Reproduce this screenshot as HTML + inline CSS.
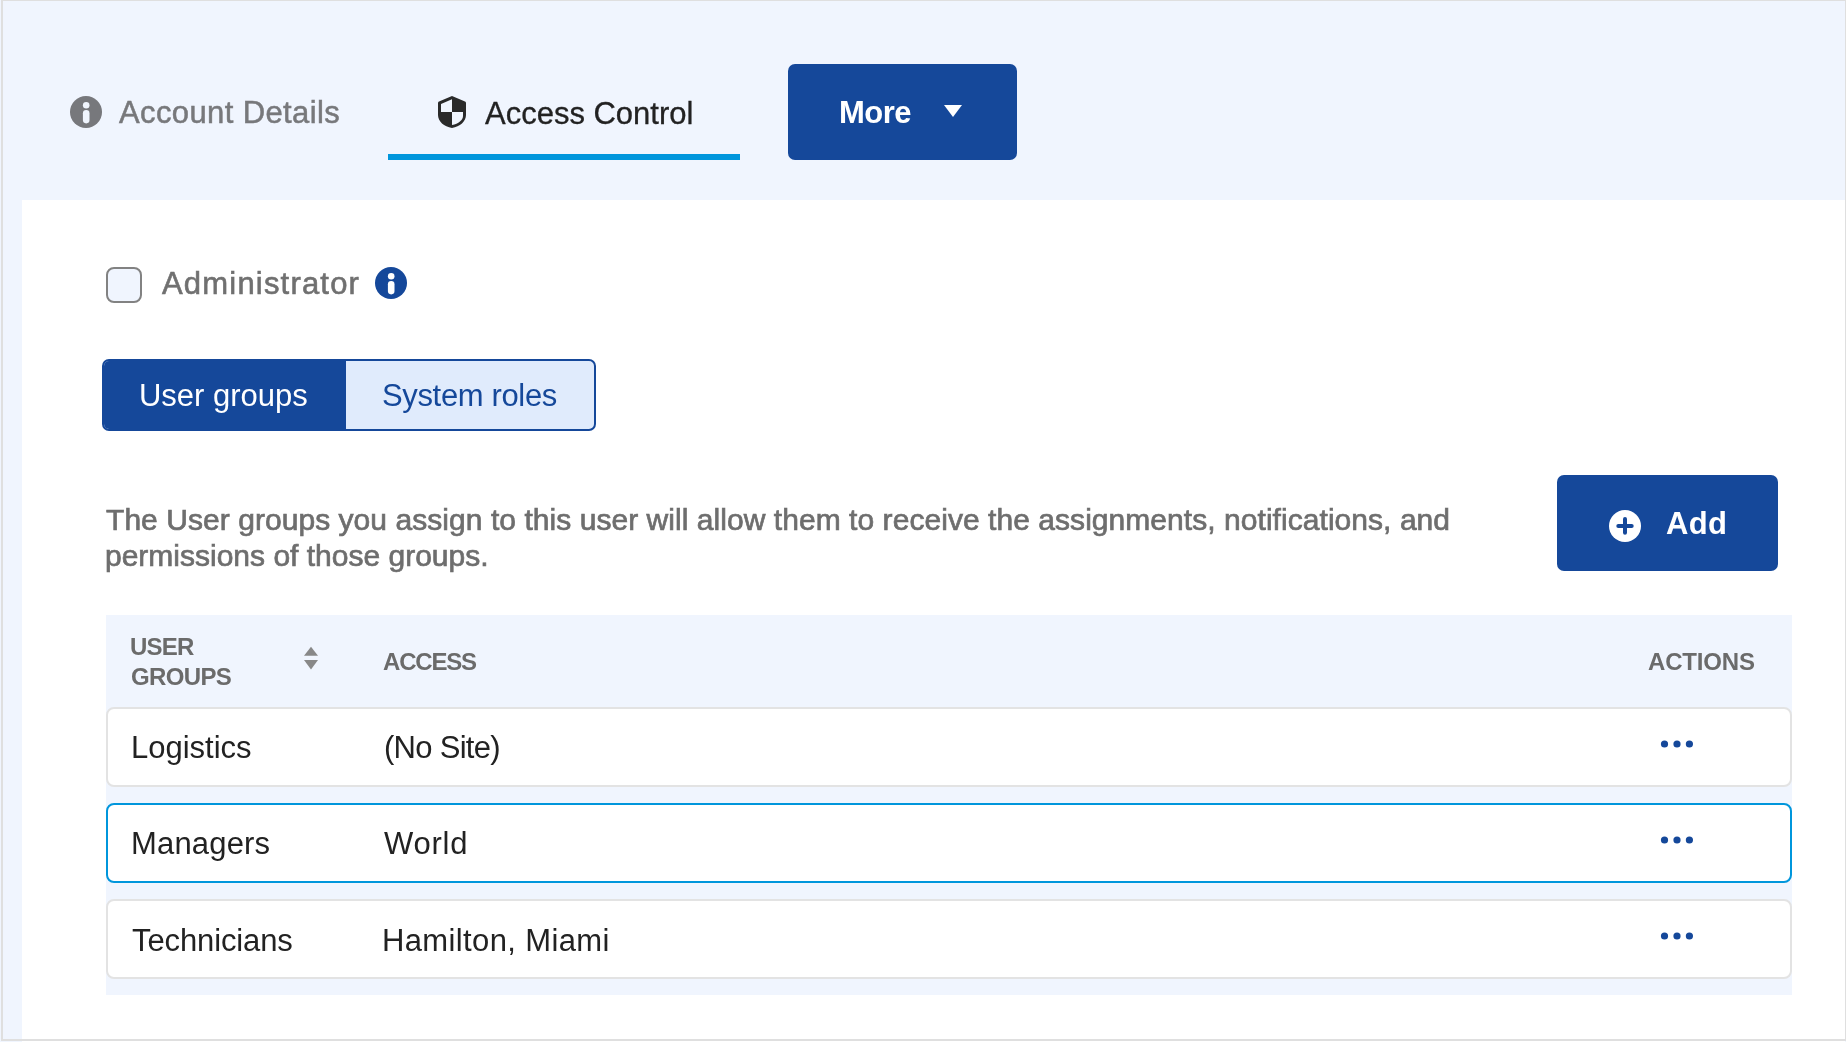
<!DOCTYPE html>
<html>
<head>
<meta charset="utf-8">
<style>
html, body { margin:0; padding:0; }
body { width:1846px; height:1042px; position:relative; overflow:hidden; background:#f0f5fe; font-family:"Liberation Sans", sans-serif; }
.a { position:absolute; box-sizing:border-box; }
.t { position:absolute; white-space:nowrap; font-family:"Liberation Sans", sans-serif; will-change:transform; }
svg { position:absolute; overflow:visible; }
</style>
</head>
<body>
<!-- frame borders -->
<div class="a" style="left:1px;top:0;width:2px;height:1041px;background:#dfdfdf;"></div>
<div class="a" style="left:1px;top:0;width:1845px;height:1px;background:#dfdfdf;"></div>
<div class="a" style="left:1845px;top:0;width:1px;height:1041px;background:#dfdfdf;"></div>
<!-- white panel -->
<div class="a" style="left:22px;top:200px;width:1823px;height:842px;background:#ffffff;"></div>
<div class="a" style="left:1px;top:1039px;width:1845px;height:2px;background:#dfdfdf;"></div>

<!-- tab icons -->
<svg style="left:70px;top:96px;" width="32" height="32" viewBox="0 0 32 32">
  <circle cx="16" cy="16" r="16" fill="#77787c"/>
  <circle cx="16.2" cy="9.2" r="3.3" fill="#f0f5fe"/>
  <rect x="12.9" y="14" width="6.6" height="13.4" rx="3.3" fill="#f0f5fe"/>
</svg>
<svg style="left:438px;top:96px;" width="28" height="32" viewBox="0 0 28 32">
  <path d="M14 0.1 L27 5.6 Q28 6 28 7.2 V19 C28 25.5 22 30.5 14 32 C6 30.5 0 25.5 0 19 V7.2 Q0 6 1 5.6 Z" fill="#2a2a2a"/>
  <path d="M3 8 L14 3.2 V15.9 H3 Z" fill="#f0f5fe"/>
  <path d="M14 15.9 H25 V20 C25 24 20.5 27.8 14 29 Z" fill="#f0f5fe"/>
</svg>
<!-- underline -->
<div class="a" style="left:388px;top:154px;width:352px;height:6px;background:#0096dc;"></div>

<!-- More button -->
<div class="a" style="left:788px;top:64px;width:229px;height:96px;background:#15489a;border-radius:7px;"></div>
<svg style="left:944px;top:105px;" width="18" height="12" viewBox="0 0 18 12">
  <path d="M0 0 H18 L9 12 Z" fill="#ffffff"/>
</svg>

<!-- checkbox -->
<div class="a" style="left:106px;top:267px;width:36px;height:36px;background:#f0f5fe;border:2px solid #828282;border-radius:8px;"></div>
<svg style="left:375px;top:267px;" width="32" height="32" viewBox="0 0 32 32">
  <circle cx="16" cy="16" r="16" fill="#15489a"/>
  <circle cx="16.2" cy="9.2" r="3.3" fill="#ffffff"/>
  <rect x="12.9" y="14" width="6.6" height="13.4" rx="3.3" fill="#ffffff"/>
</svg>

<!-- segmented control -->
<div class="a" style="left:102px;top:359px;width:494px;height:72px;background:#e0ebfc;border:2px solid #15489a;border-radius:7px;overflow:hidden;">
  <div class="a" style="left:0;top:0;width:242px;height:68px;background:#15489a;"></div>
</div>

<!-- Add button -->
<div class="a" style="left:1557px;top:475px;width:221px;height:96px;background:#15489a;border-radius:7px;"></div>
<svg style="left:1609px;top:510px;" width="32" height="32" viewBox="0 0 32 32">
  <circle cx="16" cy="16" r="16" fill="#ffffff"/>
  <path d="M9.3 16 H22.7 M16 9.1 V22.8" stroke="#15489a" stroke-width="4" stroke-linecap="round" fill="none"/>
</svg>

<!-- table -->
<div class="a" style="left:106px;top:615px;width:1686px;height:380px;background:#f0f5fe;"></div>
<svg style="left:304px;top:646px;" width="14" height="23" viewBox="0 0 14 23">
  <path d="M7 0.8 L14 9.7 H0 Z" fill="#888888"/>
  <path d="M0 14 H14 L7 23.4 Z" fill="#888888"/>
</svg>
<div class="a" style="left:106px;top:707px;width:1686px;height:80px;background:#ffffff;border:2px solid #e3e3e3;border-radius:8px;"></div>
<div class="a" style="left:106px;top:803px;width:1686px;height:80px;background:#ffffff;border:2px solid #0096dc;border-radius:8px;"></div>
<div class="a" style="left:106px;top:899px;width:1686px;height:80px;background:#ffffff;border:2px solid #e3e3e3;border-radius:8px;"></div>
<svg style="left:1660px;top:740px;" width="34" height="8" viewBox="0 0 34 8">
  <circle cx="4.5" cy="4" r="3.6" fill="#15489a"/><circle cx="17" cy="4" r="3.6" fill="#15489a"/><circle cx="29.4" cy="4" r="3.6" fill="#15489a"/>
</svg>
<svg style="left:1660px;top:836px;" width="34" height="8" viewBox="0 0 34 8">
  <circle cx="4.5" cy="4" r="3.6" fill="#15489a"/><circle cx="17" cy="4" r="3.6" fill="#15489a"/><circle cx="29.4" cy="4" r="3.6" fill="#15489a"/>
</svg>
<svg style="left:1660px;top:932px;" width="34" height="8" viewBox="0 0 34 8">
  <circle cx="4.5" cy="4" r="3.6" fill="#15489a"/><circle cx="17" cy="4" r="3.6" fill="#15489a"/><circle cx="29.4" cy="4" r="3.6" fill="#15489a"/>
</svg>

<div class="t" style="left:118.50px;top:97.40px;font-size:31px;line-height:31px;font-weight:400;color:#77787b;letter-spacing:0.387px;-webkit-text-stroke:0.5px #77787b;">Account Details</div>
<div class="t" style="left:484.50px;top:98.00px;font-size:31px;line-height:31px;font-weight:400;color:#222222;letter-spacing:-0.006px;-webkit-text-stroke:0.3px #222222;">Access Control</div>
<div class="t" style="left:839.00px;top:97.20px;font-size:31px;line-height:31px;font-weight:700;color:#ffffff;letter-spacing:-0.508px;">More</div>
<div class="t" style="left:162.40px;top:268.00px;font-size:31px;line-height:31px;font-weight:400;color:#707070;letter-spacing:1.193px;-webkit-text-stroke:0.6px #707070;">Administrator</div>
<div class="t" style="left:138.70px;top:379.60px;font-size:31px;line-height:31px;font-weight:400;color:#ffffff;letter-spacing:-0.015px;">User groups</div>
<div class="t" style="left:382.00px;top:379.60px;font-size:31px;line-height:31px;font-weight:400;color:#15489a;letter-spacing:-0.351px;">System roles</div>
<div class="t" style="left:106.30px;top:504.80px;font-size:30px;line-height:30px;font-weight:400;color:#6e6e6e;letter-spacing:0.050px;-webkit-text-stroke:0.7px #6e6e6e;">The User groups you assign to this user will allow them to receive the assignments, notifications, and</div>
<div class="t" style="left:105.30px;top:541.00px;font-size:30px;line-height:30px;font-weight:400;color:#6e6e6e;letter-spacing:0.000px;-webkit-text-stroke:0.7px #6e6e6e;">permissions of those groups.</div>
<div class="t" style="left:1666.00px;top:507.80px;font-size:31px;line-height:31px;font-weight:700;color:#ffffff;letter-spacing:0.288px;">Add</div>
<div class="t" style="left:129.80px;top:634.70px;font-size:24px;line-height:24px;font-weight:700;color:#6b6b6b;letter-spacing:-0.816px;">USER</div>
<div class="t" style="left:130.80px;top:664.50px;font-size:24px;line-height:24px;font-weight:700;color:#6b6b6b;letter-spacing:-0.642px;">GROUPS</div>
<div class="t" style="left:383.00px;top:649.50px;font-size:24px;line-height:24px;font-weight:700;color:#6b6b6b;letter-spacing:-1.202px;">ACCESS</div>
<div class="t" style="left:1647.60px;top:649.90px;font-size:24px;line-height:24px;font-weight:700;color:#6b6b6b;letter-spacing:-0.182px;">ACTIONS</div>
<div class="t" style="left:131.40px;top:732.40px;font-size:31px;line-height:31px;font-weight:400;color:#222222;letter-spacing:-0.001px;">Logistics</div>
<div class="t" style="left:384.40px;top:732.40px;font-size:31px;line-height:31px;font-weight:400;color:#222222;letter-spacing:-0.723px;">(No Site)</div>
<div class="t" style="left:131.40px;top:828.40px;font-size:31px;line-height:31px;font-weight:400;color:#222222;letter-spacing:0.179px;">Managers</div>
<div class="t" style="left:384.00px;top:828.40px;font-size:31px;line-height:31px;font-weight:400;color:#222222;letter-spacing:0.787px;">World</div>
<div class="t" style="left:132.20px;top:924.60px;font-size:31px;line-height:31px;font-weight:400;color:#222222;letter-spacing:-0.118px;">Technicians</div>
<div class="t" style="left:382.00px;top:924.60px;font-size:31px;line-height:31px;font-weight:400;color:#222222;letter-spacing:0.370px;">Hamilton, Miami</div>
</body>
</html>
